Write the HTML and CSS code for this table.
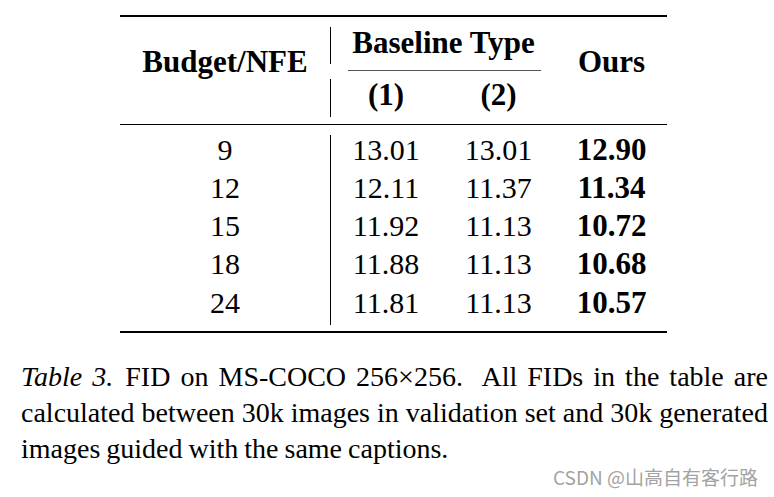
FILE: index.html
```html
<!DOCTYPE html>
<html lang="en">
<head>
<meta charset="utf-8">
<title>Table 3</title>
<link rel="stylesheet" href="styles.css">
</head>
<body>
<div class="page">
  <div class="table">
    <div class="thead">
      <div class="h-budget">Budget/NFE</div>
      <div class="vline vline-a"></div>
      <div class="h-baseline"><span class="h-text">Baseline Type</span><div class="cmid"></div></div>
      <div class="h-ours">Ours</div>
      <div class="vline vline-b"></div>
      <div class="h-sub c2">(1)</div>
      <div class="h-sub c3">(2)</div>
    </div>
    <div class="tbody">
      <div class="vline vline-body"></div>
      <div class="c1">9</div><div class="c2">13.01</div><div class="c3">13.01</div><div class="c4 best">12.90</div>
      <div class="c1">12</div><div class="c2">12.11</div><div class="c3">11.37</div><div class="c4 best">11.34</div>
      <div class="c1">15</div><div class="c2">11.92</div><div class="c3">11.13</div><div class="c4 best">10.72</div>
      <div class="c1">18</div><div class="c2">11.88</div><div class="c3">11.13</div><div class="c4 best">10.68</div>
      <div class="c1">24</div><div class="c2">11.81</div><div class="c3">11.13</div><div class="c4 best">10.57</div>
    </div>
  </div>
  <p class="caption"><em>Table 3.</em> FID on MS-COCO 256×256.&nbsp; All FIDs in the table are calculated between 30k images in validation set and 30k generated images guided with the same captions.</p>
  <div class="watermark">CSDN @山高自有客行路</div>
</div>
</body>
</html>
```

FILE: styles.css
```css
html, body {
  margin: 0;
  padding: 0;
  background: #fff;
}

.page {
  position: relative;
  width: 774px;
  height: 497px;
  overflow: hidden;
  font-family: "Liberation Serif", "Times New Roman", serif;
  color: #000;
}

.table {
  margin: 15px 0 0 120px;
  width: 547px;
  border-top: 2px solid #000;
  border-bottom: 2px solid #000;
}

.thead,
.tbody {
  display: grid;
  grid-template-columns: 210px 1px 110px 115px 111px;
  font-size: 30px;
  text-align: center;
}

.thead {
  grid-template-rows: 54px 53px;
  border-bottom: 1px solid #000;
  font-weight: bold;
  font-size: 31px;
  line-height: 32px;
}

.vline {
  background: #000;
  width: 1px;
}

.h-budget {
  grid-column: 1;
  grid-row: 1 / 3;
  padding-top: 29px;
}

.vline-a {
  grid-column: 2;
  grid-row: 1;
  margin: 10px 0 7px;
}

.vline-b {
  grid-column: 2;
  grid-row: 2;
  margin: 8px 0 7px;
}

.h-baseline {
  grid-column: 3 / 5;
  grid-row: 1;
  display: flex;
  flex-direction: column;
  padding-top: 10px;
}

.h-text {
  display: block;
}

.cmid {
  margin: auto 15px 0.5px 17px;
  height: 1px;
  background: #555;
}

.h-ours {
  grid-column: 5;
  grid-row: 1 / 3;
  padding-top: 29px;
}

.h-sub {
  grid-row: 2;
  padding-top: 8px;
}

.c1 { grid-column: 1; }
.c2 { grid-column: 3; }
.c3 { grid-column: 4; }
.c4 { grid-column: 5; }

.tbody {
  grid-template-rows: repeat(5, 38.3px);
  padding: 5.5px 0 9px;
  line-height: 38.3px;
}

.vline-body {
  grid-column: 2;
  grid-row: 1 / -1;
  margin: 4px 0 -3px;
}

.best {
  font-weight: bold;
  font-size: 31px;
}

.caption {
  margin: 26px 0 0 21px;
  width: 747px;
  font-size: 28px;
  line-height: 36px;
  word-spacing: -1px;
  text-align: justify;
}

.caption em {
  font-style: italic;
  padding-right: 2px;
}

.watermark {
  position: absolute;
  right: 16px;
  top: 464px;
  font-family: "Noto Sans CJK SC", "Noto Sans", sans-serif;
  font-size: 19px;
  line-height: 26px;
  color: #a3a3a3;
  white-space: nowrap;
}
```
